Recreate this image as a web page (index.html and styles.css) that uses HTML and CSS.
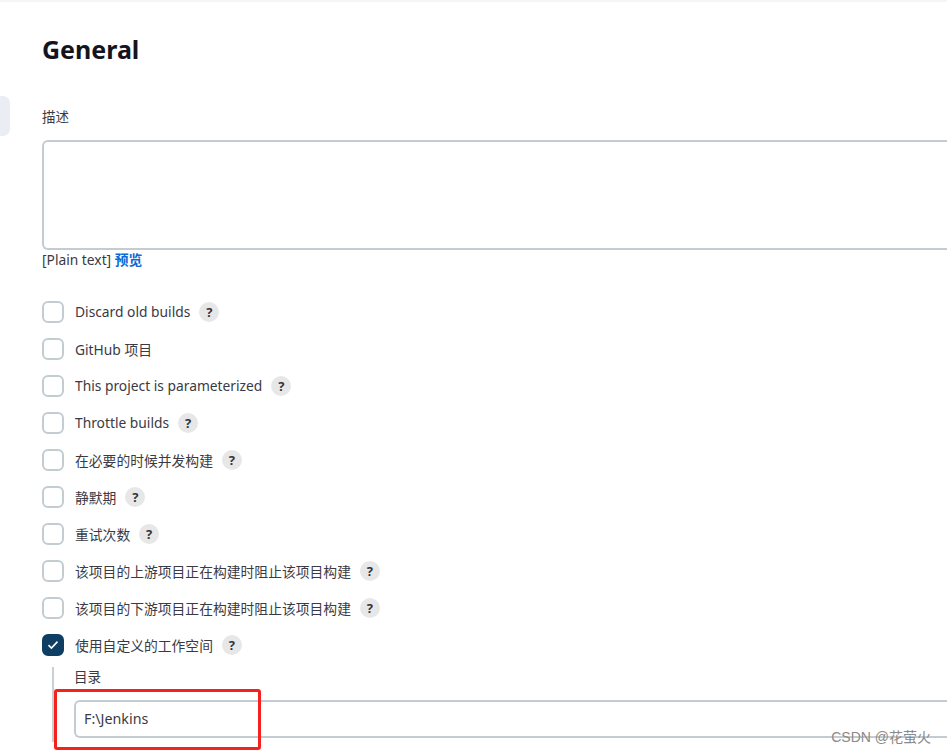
FILE: index.html
```html
<!DOCTYPE html>
<html lang="zh-CN">
<head>
	<meta charset="UTF-8">
	<title>General</title>
	<link rel="stylesheet" href="styles.css">
</head>
<body>
<div class="side-tab"></div>
<div class="main">
	<h1 class="title">General</h1>
	<div class="field-label">描述</div>
	<div class="text-box area"></div>
	<div class="preview-line">[Plain text] <a class="preview" href="#">预览</a></div>
	<div class="options">
		<div class="option"><span class="check"></span><span class="option-text">Discard old builds</span><span class="help">?</span></div>
		<div class="option"><span class="check"></span><span class="option-text">GitHub 项目</span></div>
		<div class="option"><span class="check"></span><span class="option-text">This project is parameterized</span><span class="help">?</span></div>
		<div class="option"><span class="check"></span><span class="option-text">Throttle builds</span><span class="help">?</span></div>
		<div class="option"><span class="check"></span><span class="option-text">在必要的时候并发构建</span><span class="help">?</span></div>
		<div class="option"><span class="check"></span><span class="option-text">静默期</span><span class="help">?</span></div>
		<div class="option"><span class="check"></span><span class="option-text">重试次数</span><span class="help">?</span></div>
		<div class="option"><span class="check"></span><span class="option-text">该项目的上游项目正在构建时阻止该项目构建</span><span class="help">?</span></div>
		<div class="option"><span class="check"></span><span class="option-text">该项目的下游项目正在构建时阻止该项目构建</span><span class="help">?</span></div>
		<div class="option">
			<span class="check checked">
				<svg width="12" height="10" viewBox="0 0 12 10"><path d="M1.5 5.2 4.4 8 10.5 1.6" fill="none" stroke="#fff" stroke-width="1.6"/></svg>
			</span>
			<span class="option-text">使用自定义的工作空间</span><span class="help">?</span>
		</div>
	</div>
	<div class="nested">
		<div class="nested-label">目录</div>
		<div class="text-box dir">F:\Jenkins</div>
	</div>
</div>
<div class="red-mark"></div>
<div class="watermark">CSDN @花萤火</div>
</body>
</html>
```

FILE: styles.css
```css
html, body {
	height: 100%;
}
body {
	margin: 0;
	overflow: hidden;
	position: relative;
	background: #fff;
	border-top: 2px solid #f5f5f5;
	box-sizing: border-box;
	color: #3a3a44;
	font-family: "Noto Sans", "Noto Sans CJK SC", sans-serif;
	font-size: 13.8px;
}
.side-tab {
	position: absolute;
	left: 0;
	top: 94px;
	width: 10px;
	height: 40px;
	background: #eaedf3;
	border-radius: 0 7px 7px 0;
}
.main {
	padding-left: 42px;
}
.title {
	margin: 0;
	padding-top: 28px;
	height: 46px;
	color: #14141f;
	font-size: 25px;
	line-height: 38px;
	font-weight: 700;
}
.field-label {
	margin-top: 31px;
	height: 33px;
	line-height: 20px;
	font-size: 13.5px;
}
/* the boxes run off the right edge of the shot, so no right border */
.text-box {
	border: 2px solid #c3ccd1;
	border-right: none;
	border-radius: 6px 0 0 6px;
	box-sizing: border-box;
	background: #fff;
}
.area {
	height: 110px;
}
.preview-line {
	height: 20px;
	line-height: 20px;
}
.preview {
	color: #0b6ad6;
	font-weight: 700;
	text-decoration: none;
}
.options {
	margin-top: 23px;
}
.option {
	display: flex;
	align-items: center;
	height: 37.1px;
}
.check {
	flex: none;
	display: flex;
	align-items: center;
	justify-content: center;
	width: 22px;
	height: 22px;
	box-sizing: border-box;
	border: 2px solid #c3ccd1;
	border-radius: 6px;
	background: #fff;
}
.checked {
	background: #0e3f63;
	border-color: #0e3f63;
}
.option-text {
	margin-left: 11px;
}
.help {
	flex: none;
	margin-left: 9px;
	width: 20px;
	height: 20px;
	border-radius: 50%;
	background: #e7e7e7;
	color: #33333d;
	font-size: 13px;
	font-weight: 700;
	line-height: 20px;
	text-align: center;
}
.nested {
	margin: 3px 0 0 10px;
	padding-left: 20px;
	border-left: 2px solid #c9d0d4;
	height: 75px;
}
.nested-label {
	height: 33px;
	line-height: 20px;
	font-size: 13.5px;
}
.dir {
	height: 38px;
	padding-left: 8px;
	line-height: 34px;
	font-size: 14.3px;
}
.red-mark {
	position: absolute;
	left: 54px;
	top: 687px;
	width: 207px;
	height: 61px;
	box-sizing: border-box;
	border: 3px solid #f5211c;
	border-radius: 3px;
}
.watermark {
	position: absolute;
	right: 16px;
	top: 726px;
	color: #8a8a8a;
	font-family: "Liberation Sans", "Noto Sans CJK SC", sans-serif;
	font-size: 14px;
	line-height: 18px;
}
```
